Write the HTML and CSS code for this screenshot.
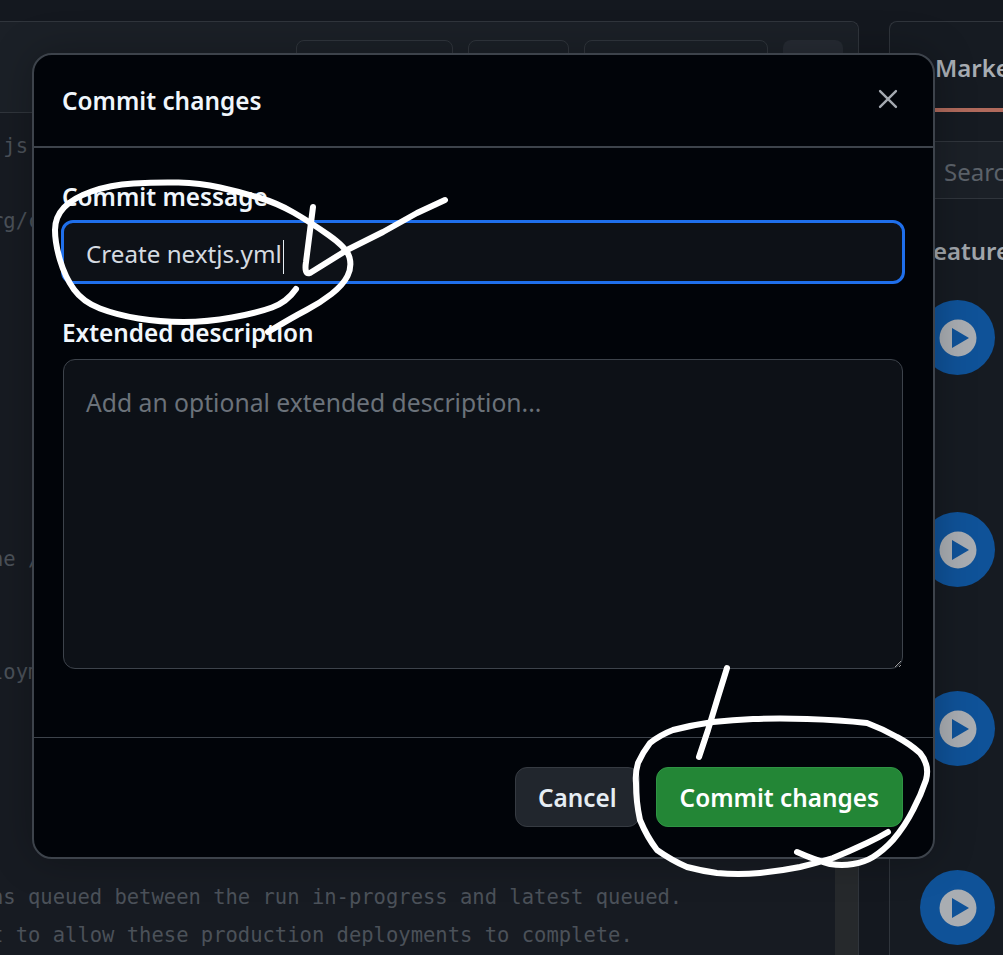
FILE: index.html
```html
<!DOCTYPE html>
<html lang="en">
<head>
    <meta charset="UTF-8">
    <meta name="viewport" content="width=device-width, initial-scale=1.0">
    <title>Commit changes</title>
    <link rel="stylesheet" href="styles.css">
</head>
<body>

<div class="page">
    <!-- Editor behind the dialog -->
    <section class="editor">
        <div class="editor-head">
            <span class="head-btn head-btn-a"></span>
            <span class="head-btn head-btn-b"></span>
            <span class="head-btn head-btn-c"></span>
            <span class="head-btn head-btn-d"></span>
        </div>
        <div class="editor-body">
            <div class="code">
                <div class="line"> js</div>
                <div class="line"></div>
                <div class="line">rg/c</div>
                <div class="line"></div>
                <div class="line"></div>
                <div class="line"></div>
                <div class="line"></div>
                <div class="line"></div>
                <div class="line"></div>
                <div class="line"></div>
                <div class="line"></div>
                <div class="line">ne /</div>
                <div class="line"></div>
                <div class="line"></div>
                <div class="line">loym</div>
                <div class="line"></div>
                <div class="line"></div>
                <div class="line"></div>
                <div class="line"></div>
                <div class="line"></div>
                <div class="line">ns queued between the run in-progress and latest queued.</div>
                <div class="line">t to allow these production deployments to complete.</div>
            </div>
            <div class="scrollbar"></div>
        </div>
    </section>

    <!-- Marketplace sidebar -->
    <aside class="sidebar">
        <div class="tabs"><span class="tab">Marketplace</span></div>
        <div class="search">Search</div>
        <h3 class="featured">Featured</h3>
        <div class="action action-first">
            <span class="play"><svg viewBox="0 0 38 38" width="38" height="38"><circle cx="19" cy="19" r="18.5" fill="#a9adb2"/><path d="M13 9v20l17-10z" fill="#0f5298"/></svg></span>
        </div>
        <div class="action">
            <span class="play"><svg viewBox="0 0 38 38" width="38" height="38"><circle cx="19" cy="19" r="18.5" fill="#a9adb2"/><path d="M13 9v20l17-10z" fill="#0f5298"/></svg></span>
        </div>
        <div class="action">
            <span class="play"><svg viewBox="0 0 38 38" width="38" height="38"><circle cx="19" cy="19" r="18.5" fill="#a9adb2"/><path d="M13 9v20l17-10z" fill="#0f5298"/></svg></span>
        </div>
        <div class="action">
            <span class="play"><svg viewBox="0 0 38 38" width="38" height="38"><circle cx="19" cy="19" r="18.5" fill="#a9adb2"/><path d="M13 9v20l17-10z" fill="#0f5298"/></svg></span>
        </div>
    </aside>
</div>

<div class="dialog">
    <header class="dialog-head">
        <h2 class="dialog-title">Commit changes</h2>
        <button class="close" aria-label="Close">
            <svg viewBox="0 0 16 16" width="24" height="24"><path d="M2.7 2.7l10.6 10.6M13.3 2.7L2.7 13.3" stroke="#a4a9b0" stroke-width="1.6" stroke-linecap="round" fill="none"/></svg>
        </button>
    </header>
    <div class="dialog-body">
        <label class="label">Commit message</label>
        <div class="input">Create nextjs.yml<span class="caret"></span></div>
        <label class="label label-second">Extended description</label>
        <textarea class="textarea" placeholder="Add an optional extended description..."></textarea>
    </div>
    <footer class="dialog-foot">
        <button class="btn btn-cancel">Cancel</button>
        <button class="btn btn-commit">Commit changes</button>
    </footer>
</div>

<!-- Hand drawn marks on top of the screenshot -->
<svg class="marks" viewBox="0 0 1003 955" width="1003" height="955">
    <path d="M296 289Q287 302 272 307.5Q257 313 232 317.5Q207 322 183.5 322Q160 322 138.5 318.5Q117 315 100 308.5Q83 302 74 289.5Q65 277 60 260Q55 243 55 230Q55 217 64 207.5Q73 198 91.5 191.5Q110 185 133.5 183.5Q157 182 178.5 182.5Q200 183 220 187.5Q240 192 258.5 197.5Q277 203 293.5 212.5Q310 222 328.5 235Q347 248 349.5 257.5Q352 267 347.5 276Q343 285 331.5 294Q320 303 306.5 310Q293 317 268 332"/>
    <path d="M445 200L417 213L383 232L347 250L310 273Q304 275 306 262L313 207"/>
    <path d="M797 852Q815 860 830 864Q842 866 853 864Q865 862 873 857Q884 850 893 840Q905 826 913 810Q921 795 926 780Q930 765 920 753Q910 744 897 737Q883 729 867 723Q840 720 807 719Q780 718 753 719Q733 720 713 722Q692 725 673 730Q660 735 650 743Q643 752 638 763Q635 773 636 783Q636 802 640 820Q647 837 657 850Q671 860 687 867Q702 871 717 873Q738 875 760 873Q780 871 800 867Q817 863 833 858Q850 851 867 843Q878 838 888 832"/>
    <path d="M727 668L718 697L708 730L699 757"/>
</svg>

</body>
</html>
```

FILE: styles.css
```css
* {
    box-sizing: border-box;
}
html, body {
    margin: 0;
    height: 955px;
    overflow: hidden;
    background-color: #14181f;
    font-family: "Noto Sans", Arial, sans-serif;
}
.page {
    display: flex;
    gap: 30px;
    height: 955px;
    padding-top: 21px;
}
.editor {
    width: 859px;
    flex: none;
    display: flex;
    flex-direction: column;
    background-color: #171b22;
    border: 1px solid #30353c;
    border-left: none;
    border-bottom: none;
    border-top-right-radius: 8px;
}
.editor-head {
    height: 91px;
    flex: none;
    display: flex;
    justify-content: flex-end;
    gap: 15px;
    padding: 18px 15px 0 0;
    background-color: #1b2027;
    border-bottom: 1px solid #30353c;
    border-top-right-radius: 8px;
}
.head-btn {
    height: 44px;
    border: 1px solid #30353c;
    border-radius: 8px;
}
.head-btn-a { width: 157px; }
.head-btn-b { width: 101px; }
.head-btn-c { width: 184px; }
.head-btn-d { width: 60px; background-color: #262b33; border: none; }
.editor-body {
    flex: 1;
    display: flex;
    min-height: 0;
}
.code {
    flex: 1;
    padding-top: 14.5px;
    overflow: hidden;
    font-family: "DejaVu Sans Mono", monospace;
    font-size: 20.5px;
    color: #4b5159;
}
.line {
    height: 37.6px;
    line-height: 37.6px;
    margin-left: -9px;
    white-space: pre;
}
.scrollbar {
    width: 23px;
    flex: none;
    background-color: #26292c;
}
.sidebar {
    flex: 1;
    min-width: 0;
    overflow: hidden;
    background-color: #161b22;
    border: 1px solid #30353c;
    border-right: none;
    border-bottom: none;
    border-top-left-radius: 8px;
}
.tabs {
    height: 120px;
    padding-left: 45px;
    border-bottom: 1px solid #30353c;
}
.tab {
    display: block;
    width: 200px;
    height: 90px;
    padding-top: 27px;
    font-size: 24px;
    line-height: 38px;
    font-weight: 600;
    color: #a8adb3;
    white-space: nowrap;
    border-bottom: 4px solid #b06a5c;
}
.search {
    height: 57px;
    padding-left: 54px;
    font-size: 24px;
    line-height: 60px;
    color: #5c626a;
    background-color: #1b2027;
    border-bottom: 1px solid #30353c;
}
.featured {
    margin: 0;
    height: 101px;
    padding: 33px 0 0 30px;
    font-size: 24px;
    line-height: 38px;
    font-weight: 600;
    color: #a0a5ab;
    white-space: nowrap;
}
.action {
    height: 179px;
    padding-left: 30px;
}
.action-first {
    height: 212px;
}
.play {
    display: flex;
    justify-content: center;
    align-items: center;
    width: 75px;
    height: 75px;
    border-radius: 50%;
    background-color: #0f5298;
}
.play svg {
    display: block;
}

/* dialog */
.dialog {
    position: absolute;
    left: 31.5px;
    top: 52.5px;
    width: 903.5px;
    height: 806px;
    display: flex;
    flex-direction: column;
    background-color: #010409;
    border: 2px solid #3d434b;
    border-radius: 20px;
    box-shadow: 0 0 40px rgba(0, 0, 0, 0.25);
    color: #f0f6fc;
}
.dialog-head {
    height: 93px;
    flex: none;
    display: flex;
    justify-content: space-between;
    align-items: center;
    padding: 1px 33px 0 28.5px;
    border-bottom: 2px solid #3d434b;
}
.dialog-title {
    margin: 0;
    font-size: 24.35px;
    line-height: 34px;
    font-weight: 600;
}
.close {
    display: flex;
    padding: 0;
    margin-bottom: 4px;
    background: none;
    border: none;
    cursor: pointer;
}
.dialog-body {
    flex: 1;
    display: flex;
    flex-direction: column;
    padding: 32.5px 30px 0 29.5px;
}
.label {
    margin-left: -1px;
    font-size: 24.35px;
    line-height: 34px;
    font-weight: 600;
}
.label-second {
    margin-top: 32px;
}
.input {
    height: 64px;
    margin: 6px -2px 0;
    padding-left: 22px;
    font-size: 24.2px;
    line-height: 62px;
    color: #d5dbe1;
    background-color: #0d1117;
    border: 3px solid #1f6feb;
    border-radius: 12px;
}
.caret {
    display: inline-block;
    width: 1.5px;
    height: 34px;
    margin-left: 1px;
    vertical-align: middle;
    background-color: #e6edf3;
}
.textarea {
    display: block;
    height: 310px;
    margin-top: 9px;
    padding: 25px 22px;
    font-family: inherit;
    font-size: 24.7px;
    line-height: 36px;
    color: #e6edf3;
    background-color: #0d1117;
    border: 1px solid #3d434b;
    border-radius: 12px;
    outline: none;
}
.textarea::placeholder {
    color: #6b727a;
}
.dialog-foot {
    height: 119.5px;
    flex: none;
    display: flex;
    justify-content: flex-end;
    gap: 16px;
    padding: 28.5px 30px 0;
    border-top: 1px solid #3d434b;
}
.btn {
    height: 60px;
    padding: 2px 23px 0;
    font-family: inherit;
    font-size: 24.35px;
    font-weight: 600;
    border-radius: 12px;
    cursor: pointer;
}
.btn-cancel {
    padding: 2px 22px 0;
    color: #e6edf3;
    background-color: #21262d;
    border: 1px solid #363b42;
}
.btn-commit {
    color: #fff;
    background-color: #238636;
    border: 1px solid #2f9444;
}
.marks {
    position: absolute;
    left: 0;
    top: 0;
    pointer-events: none;
    fill: none;
    stroke: #fff;
    stroke-width: 6;
    stroke-linecap: round;
    stroke-linejoin: round;
}
```
